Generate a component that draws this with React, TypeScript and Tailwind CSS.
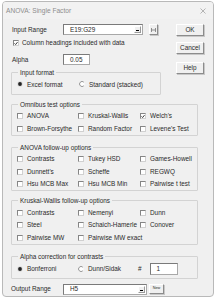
import React from "react";

const inputBorder =
  "bg-white border border-[#a8a8a8] border-t-[#7a7a7a] border-l-[#7a7a7a]";
const btnBorder =
  "bg-[#f0f0f0] border border-[#8c8c8c] border-t-white border-l-white shadow-[1px_1px_0_#c8c8c8]";

function Check({ checked }: { checked?: boolean }) {
  return (
    <span className="flex w-[6px] h-[6px] shrink-0 items-center justify-center bg-white border border-[#858585] border-r-[#d0d0d0] border-b-[#d0d0d0]">
      {checked && (
        <svg width="5" height="5" viewBox="0 0 5 5">
          <path d="M0.6 2.4 L2 3.8 L4.4 0.8" stroke="#222" strokeWidth="1.1" fill="none" />
        </svg>
      )}
    </span>
  );
}

function Radio({ on }: { on?: boolean }) {
  return (
    <svg width="6" height="6" viewBox="0 0 6 6" className="shrink-0">
      {on ? (
        <>
          <circle cx="3" cy="3" r="2.7" fill="#d8d8d8" />
          <circle cx="3" cy="3" r="1.9" fill="#222" />
        </>
      ) : (
        <>
          <circle cx="3" cy="3" r="2.5" fill="white" />
          <path d="M4.8 1.2 A2.5 2.5 0 1 0 4.8 4.8" stroke="#8a8a8a" strokeWidth="0.9" fill="none" />
        </>
      )}
    </svg>
  );
}

function Opt({ label, checked }: { label: string; checked?: boolean }) {
  return (
    <div className="flex items-center h-[12.5px] whitespace-nowrap">
      <Check checked={checked} />
      <span className="ml-[4px]">{label}</span>
    </div>
  );
}

function RadioOpt({ label, on }: { label: string; on?: boolean }) {
  return (
    <div className="flex items-center whitespace-nowrap">
      <Radio on={on} />
      <span className="ml-[4px]">{label}</span>
    </div>
  );
}

function Group({
  title,
  className,
  children,
}: {
  title: string;
  className?: string;
  children: React.ReactNode;
}) {
  return (
    <fieldset className={"border border-[#d3d3d3] rounded-[1px] " + (className || "")}>
      <legend className="ml-[6px] px-[2px] leading-[9px]">{title}</legend>
      {children}
    </fieldset>
  );
}

function DotsBtn() {
  return (
    <span className="ml-auto mr-[1px] flex w-[7px] h-[7px] items-end justify-center bg-[#f0f0f0] border border-[#9a9a9a] border-t-white border-l-white">
      <span className="mb-[1px] w-[3px] h-[1px] bg-black" />
    </span>
  );
}

export default function App() {
  return (
    <div className="w-[216px] h-[300px] bg-white pl-[2px] pt-[1px] font-['Liberation_Sans',Arial,sans-serif] text-[6.4px] text-[#2a2a2a]">
      <div className="w-[212px] h-[296px] border border-[#b9b9b9] rounded-[4px] bg-[#f0f0f0] flex flex-col overflow-hidden">
        {/* title bar */}
        <div className="h-[17px] flex items-center justify-between pl-[3px] pr-[7px] bg-[#f2f2f2] text-[#8d8d8d] text-[6.6px]">
          <span>ANOVA: Single Factor</span>
          <svg width="6" height="6" viewBox="0 0 6 6">
            <path d="M0.5 0.5 L5.5 5.5 M5.5 0.5 L0.5 5.5" stroke="#9a9a9a" strokeWidth="0.7" />
          </svg>
        </div>

        <div className="flex flex-col pl-[8px]">
          {/* top section */}
          <div className="flex pt-[5px]">
            <div className="flex flex-col w-[150px]">
              <div className="flex items-center h-[11px]">
                <span className="w-[52px] pl-[1px]">Input Range</span>
                <div className={"flex items-center w-[80px] h-[11px] pl-[6px] " + inputBorder}>
                  <span>E19:G29</span>
                  <DotsBtn />
                </div>
                <span className={"ml-[6px] flex w-[9px] h-[11px] items-center justify-center " + btnBorder}>
                  <svg width="5" height="4" viewBox="0 0 5 4">
                    <path d="M0.5 0 V4 M4.5 0 V4 M0.5 2 H4.5" stroke="#777" strokeWidth="0.8" />
                  </svg>
                </span>
              </div>
              <div className="flex items-center h-[10px] mt-[3px] pl-[2px]">
                <Check checked />
                <span className="ml-[3px]">Column headings included with data</span>
              </div>
              <div className="flex items-center h-[11px] mt-[6px]">
                <span className="w-[52px] pl-[1px]">Alpha</span>
                <div className={"flex items-center w-[27px] h-[11px] pl-[6px] " + inputBorder}>
                  0.05
                </div>
              </div>
              <Group title="Input format" className="mt-[3px] pb-[3px]">
                <div className="grid grid-cols-[62px_1fr] pl-[5px] pt-[1.25px] h-[13.75px] items-center">
                  <RadioOpt label="Excel format" on />
                  <RadioOpt label="Standard (stacked)" />
                </div>
              </Group>
            </div>
            <div className="flex flex-col ml-[15px] w-[28px]">
              <span className={"flex h-[12px] items-center justify-center " + btnBorder}>OK</span>
              <span className={"flex h-[12px] mt-[6px] items-center justify-center " + btnBorder}>Cancel</span>
              <span className={"flex h-[12px] mt-[8px] items-center justify-center " + btnBorder}>Help</span>
            </div>
          </div>

          <Group title="Omnibus test options" className="w-[187px] mt-[5px]">
            <div className="grid grid-cols-[61px_62px_1fr] pl-[5px] pt-[1.25px]">
              <Opt label="ANOVA" />
              <Opt label="Kruskal-Wallis" />
              <Opt label="Welch's" checked />
              <Opt label="Brown-Forsythe" />
              <Opt label="Random Factor" />
              <Opt label="Levene's Test" />
            </div>
          </Group>

          <Group title="ANOVA follow-up options" className="w-[187px] mt-[6.5px]">
            <div className="grid grid-cols-[61px_62px_1fr] pl-[5px] pt-[1.25px]">
              <Opt label="Contrasts" />
              <Opt label="Tukey HSD" />
              <Opt label="Games-Howell" />
              <Opt label="Dunnett's" />
              <Opt label="Scheffe" />
              <Opt label="REGWQ" />
              <Opt label="Hsu MCB Max" />
              <Opt label="Hsu MCB Min" />
              <Opt label="Pairwise t test" />
            </div>
          </Group>

          <Group title="Kruskal-Wallis follow-up options" className="w-[187px] mt-[5px]">
            <div className="grid grid-cols-[61px_62px_1fr] pl-[5px] pt-[1.25px]">
              <Opt label="Contrasts" />
              <Opt label="Nemenyi" />
              <Opt label="Dunn" />
              <Opt label="Steel" />
              <Opt label="Schaich-Hamerle" />
              <Opt label="Conover" />
              <Opt label="Pairwise MW" />
              <Opt label="Pairwise MW exact" />
            </div>
          </Group>

          <Group title="Alpha correction for contrasts" className="w-[187px] mt-[6.5px] pb-[1.5px]">
            <div className="grid grid-cols-[61px_60px_1fr] pl-[5px] pt-[1.5px] h-[15.5px] items-center">
              <RadioOpt label="Bonferroni" on />
              <RadioOpt label="Dunn/Sidak" />
              <div className="flex items-center">
                <span>#</span>
                <div className={"flex items-center ml-[8px] w-[28px] h-[12px] pl-[6px] " + inputBorder}>1</div>
              </div>
            </div>
          </Group>

          <div className="flex items-center h-[11px] mt-[5px]">
            <span className="w-[52px]">Output Range</span>
            <div className={"flex items-center w-[84px] h-[11px] pl-[6px] " + inputBorder}>
              <span>H5</span>
              <DotsBtn />
            </div>
            <span className={"ml-[2px] flex w-[15px] h-[10px] items-center justify-center text-[3.8px] " + btnBorder}>
              New
            </span>
          </div>
        </div>
      </div>
    </div>
  );
}
